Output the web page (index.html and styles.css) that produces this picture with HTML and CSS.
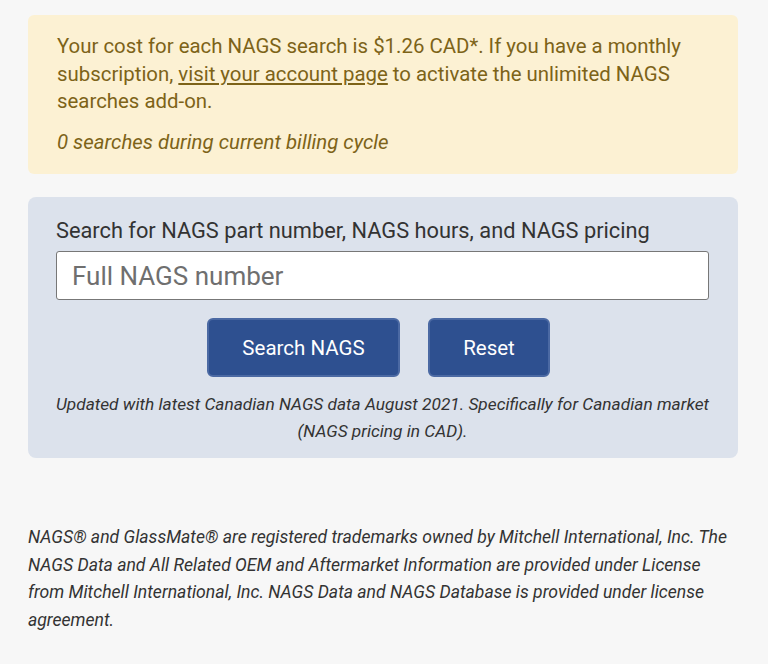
FILE: index.html
```html
<!doctype html>
<html lang="en">
  <head>
    <meta charset="utf-8">
    <meta name="viewport" content="width=device-width, initial-scale=1">
    <title>NAGS search</title>
    <link rel="stylesheet" href="styles.css">
  </head>
  <body>
    <div class="page">
        <div class="notice">
            <p>Your cost for each NAGS search is $1.26 CAD*. If you have a monthly subscription, <a href="/account">visit your account page</a> to activate the unlimited NAGS searches add-on.</p>
            <p class="count">0 searches during current billing cycle</p>
        </div>
        <div class="search-box">
            <label for="nags">Search for NAGS part number, NAGS hours, and NAGS pricing</label>
            <input type="text" id="nags" name="nags" placeholder="Full NAGS number">
            <div class="buttons">
                <button type="button" class="btn btn-search">Search NAGS</button>
                <button type="button" class="btn btn-reset">Reset</button>
            </div>
            <p class="note">Updated with latest Canadian NAGS data August 2021. Specifically for Canadian market (NAGS pricing in CAD).</p>
        </div>
        <p class="legal">NAGS® and GlassMate® are registered trademarks owned by Mitchell International, Inc. The NAGS Data and All Related OEM and Aftermarket Information are provided under License from Mitchell International, Inc. NAGS Data and NAGS Database is provided under license agreement.</p>
    </div>
  </body>
</html>
```

FILE: styles.css
```css
body{
    margin:0;
    background-color:#f7f7f7;
    font-family: Roboto,Arial,sans-serif;
    color:#333;
}
.page{
    padding:15px 30px 20px 28px;
}
.notice{
    background-color:#fcf1d3;
    color:#7d6318;
    border-radius:6px;
    padding:18px 29px 18px;
    font-size:20.4px;
    line-height:27.5px;
}
.notice p{
    margin:0;
}
.notice a{
    color:#7d6318;
    text-decoration: underline;
}
.notice .count{
    font-style: italic;
    margin-top:13px;
}
.search-box{
    margin-top:23px;
    background-color:#dce2ec;
    border-radius:8px;
    padding:20px 29px 13px 28px;
}
label{
    display:block;
    font-size:21.8px;
    line-height:28px;
    color:#333;
}
input{
    display:block;
    box-sizing: border-box;
    width:100%;
    height:49px;
    margin-top:6px;
    padding:0 15px;
    font-family: Roboto,Arial,sans-serif;
    font-size:26px;
    color:#333;
    background:white;
    border:1px solid #777;
    border-radius:3px;
}
input::placeholder{
    color:#6f6f6f;
}
.buttons{
    display:flex;
    justify-content: center;
    gap:28px;
    margin-top:18px;
    padding-right:8px;
}
.btn{
    height:59px;
    font-family: Roboto,Arial,sans-serif;
    font-size:20.5px;
    color:white;
    background-color:#2e5090;
    border:2px solid #4b69a3;
    border-radius:6px;
    cursor: pointer;
}
.btn-search{
    width:193px;
}
.btn-reset{
    width:122px;
}
.note{
    margin:14px -12px 0;
    text-align: center;
    font-style: italic;
    font-size:17.3px;
    line-height:27px;
    color:#333;
}
.legal{
    margin:66px 10px 0 0;
    font-style: italic;
    font-size:17.6px;
    line-height:27.5px;
    color:#333;
}
```
